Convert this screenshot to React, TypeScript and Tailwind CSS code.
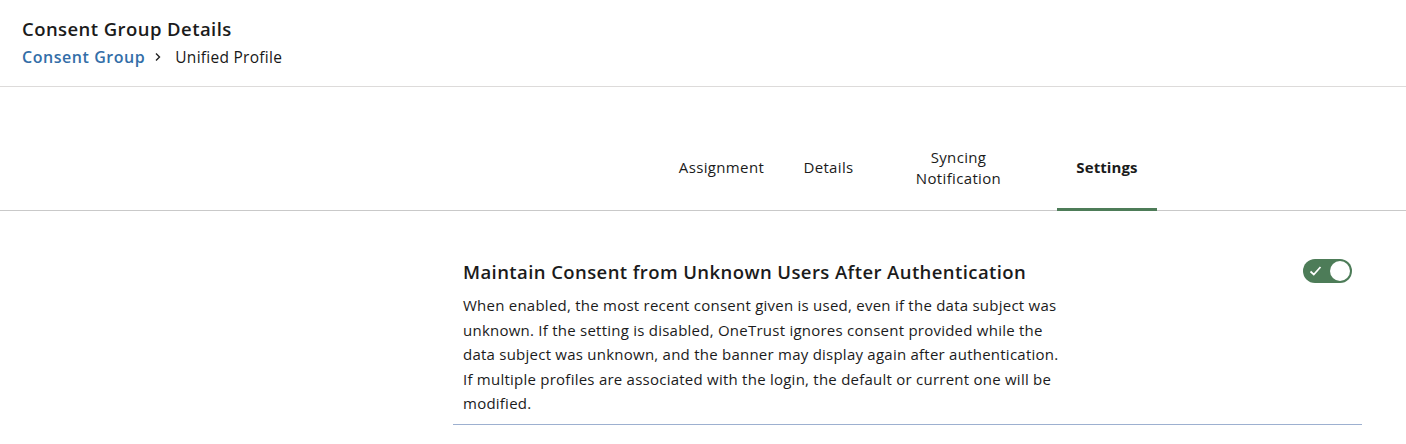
import React from "react";

export default function App() {
  const font = { fontFamily: "'Open Sans', 'Noto Sans', sans-serif" };
  return (
    <div className="w-[1406px] h-[444px] bg-white text-[#181818] overflow-hidden" style={font}>
      <header className="h-[87px] border-b border-[#dddbda] pl-[22px] pt-[16px]">
        <h1 className="text-[18.5px] leading-[25px] font-semibold tracking-[0.43px] text-[#1b1b1b]">
          Consent Group Details
        </h1>
        <nav className="mt-[5px] flex items-center text-[15.5px] leading-[22px]">
          <a className="text-[16px] font-semibold tracking-[0.55px] text-[#336ea8]">Consent Group</a>
          <svg className="ml-[9px] mr-[13px]" width="8" height="10" viewBox="0 0 8 10">
            <path d="M2 1.5 L5.5 5 L2 8.5" fill="none" stroke="#222" strokeWidth="1.4" />
          </svg>
          <span className="tracking-[0.27px] text-[#181818]">Unified Profile</span>
        </nav>
      </header>
      <div className="h-[124px] border-b border-[#c9c9c9] flex items-end">
        <div className="ml-[661px] flex items-stretch h-[84px] text-[15px] leading-[21px] tracking-[0.35px] text-[#1b1b1b]">
          <div className="w-[121px] flex items-center justify-center pt-[1px] pb-[2px]">Assignment</div>
          <div className="w-[93px] flex items-center justify-center pt-[1px] pb-[2px]">Details</div>
          <div className="w-[167px] flex items-center justify-center text-center pt-[1px] pb-[2px]">
            Syncing
            <br />
            Notification
          </div>
          <div className="ml-[15px] w-[100px] flex items-center justify-center pt-[1px] font-bold tracking-[0.1px] border-b-[3px] border-[#4d7c58] mb-[-1px]">
            Settings
          </div>
        </div>
      </div>
      <section className="ml-[453px] w-[909px] pt-[48px] border-b border-[#9db0d0]">
        <div className="flex items-start justify-between px-[10px]">
          <h2 className="text-[18.5px] leading-[25px] font-semibold tracking-[0.41px] text-[#1b1b1b]">
            Maintain Consent from Unknown Users After Authentication
          </h2>
          <div className="w-[49px] h-[24px] rounded-full bg-[#4d7c58] relative flex items-center">
            <svg className="ml-[6px]" width="13" height="12" viewBox="0 0 13 12">
              <path d="M1.5 6.5 L4.8 9.5 L11.5 2" fill="none" stroke="white" strokeWidth="1.7" />
            </svg>
            <span className="absolute right-[2px] top-[2px] w-[20px] h-[20px] rounded-full bg-white" />
          </div>
        </div>
        <p className="px-[10px] mt-[9px] w-[680px] text-[15px] leading-[24.5px] tracking-[0.24px] text-[#1b1b1b] pb-[8px]">
          When enabled, the most recent consent given is used, even if the data subject was
          <br />
          unknown. If the setting is disabled, OneTrust ignores consent provided while the
          <br />
          data subject was unknown, and the banner may display again after authentication.
          <br />
          If multiple profiles are associated with the login, the default or current one will be
          <br />
          modified.
        </p>
      </section>
    </div>
  );
}
